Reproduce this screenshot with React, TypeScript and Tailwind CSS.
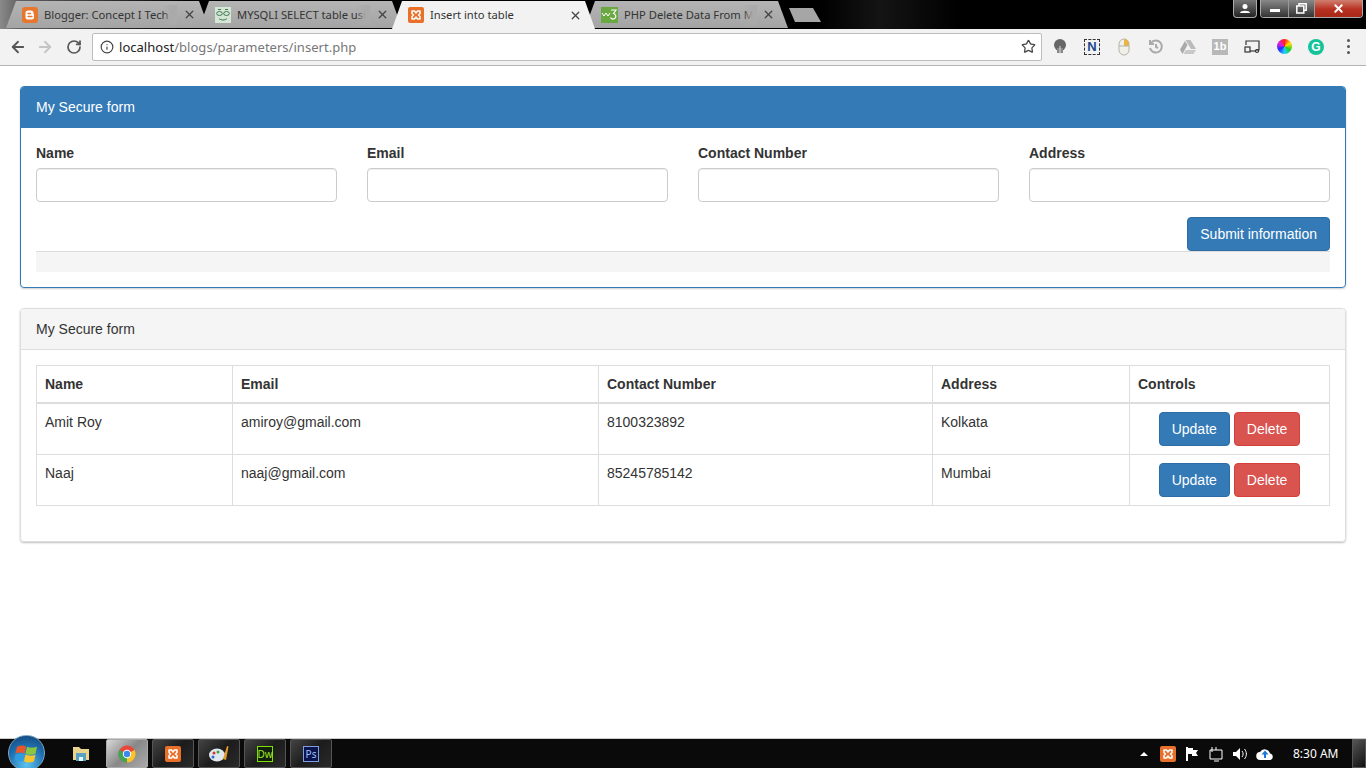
import { ArrowLeft, ArrowRight, Info, RotateCw, Star, X } from "lucide-react";
import type { ReactNode } from "react";

function XamppIcon({ size = 16 }: { size?: number }) {
  return (
    <svg width={size} height={size} viewBox="0 0 16 16" className="shrink-0">
      <rect width="16" height="16" rx="2" fill="#e8702a" />
      <path d="M4 4h2.500l1.500 2 1.500-2H12v2.500L10.500 8l1.500 1.500V12H9.500L8 10l-1.500 2H4V9.500L5.500 8 4 6.500z" fill="none" stroke="#fff" strokeWidth="1.500" strokeLinejoin="round" />
    </svg>
  );
}

function BloggerIcon() {
  return (
    <svg width="16" height="16" viewBox="0 0 16 16" className="shrink-0">
      <rect width="16" height="16" rx="3" fill="#e8772e" />
      <path d="M6 3.500h3a2.500 2.500 0 0 1 2.500 2.500v1l.5.500v2.500A2.500 2.500 0 0 1 9.500 12.500h-3.500A2.500 2.500 0 0 1 3.500 10V6A2.500 2.500 0 0 1 6 3.500z" fill="#fff" />
      <path d="M6 6.500h2.500M6 9.500h4" stroke="#e8772e" strokeWidth="1.300" strokeLinecap="round" />
    </svg>
  );
}

function GlassesIcon() {
  return (
    <svg width="16" height="16" viewBox="0 0 16 16" className="shrink-0">
      <rect width="16" height="16" fill="#d5e6d5" />
      <ellipse cx="4.500" cy="6.500" rx="2.800" ry="2" fill="none" stroke="#3d7a55" strokeWidth="1" />
      <ellipse cx="11.500" cy="6.500" rx="2.800" ry="2" fill="none" stroke="#3d7a55" strokeWidth="1" />
      <path d="M3 2.500h3M10 2.500h3M4 11.500c2 2 6 2 8 0" fill="none" stroke="#3d7a55" strokeWidth="1" />
    </svg>
  );
}

function W3Icon() {
  return (
    <svg width="17" height="16" viewBox="0 0 17 16" className="shrink-0">
      <rect width="17" height="16" fill="#6aa842" />
      <path d="M1 6l2 3 2-3 2 3 2-3" fill="none" stroke="#fff" strokeWidth="1" />
      <path d="M10 3h5l-2.500 3.500a2.800 2.800 0 1 1-3 4" fill="none" stroke="#fff" strokeWidth="1.200" />
    </svg>
  );
}

function ChromeLogo() {
  return (
    <svg width="18" height="18" viewBox="0 0 18 18">
      <circle cx="9" cy="9" r="8.500" fill="#e8483a" />
      <path d="M9 9L1.600 4.700A8.500 8.500 0 0 0 9 17.500z" fill="#3ea655" />
      <path d="M9 9V17.500A8.500 8.500 0 0 0 16.400 4.700z" fill="#f7c42c" />
      <path d="M9 9L1.600 4.700 9 .5 16.400 4.700z" fill="#e8483a" />
      <circle cx="9" cy="9" r="4.200" fill="#fff" />
      <circle cx="9" cy="9" r="3.200" fill="#3f86f0" />
    </svg>
  );
}

function Tab({ icon, title, active, first }: { icon: ReactNode; title: string; active?: boolean; first?: boolean }) {
  return (
    <div
      className={`relative flex w-[203px] shrink-0 items-center pl-[16px] pr-[13px] [clip-path:polygon(10px_0,calc(100%-10px)_0,100%_100%,0_100%)] ${first ? "" : "-ml-[10px]"} ${
        active ? "z-10 h-[28px] bg-[#f2f2f2]" : "h-[27px] bg-[linear-gradient(#b4b4b4,#a4a4a4)]"
      }`}
    >
      {icon}
      <div className="relative ml-[6px] w-[133px] overflow-hidden whitespace-nowrap text-[11.200px] leading-[20px] text-[#333]">
        {title}
        {!active && <div className="absolute inset-y-0 right-0 w-[14px] bg-[linear-gradient(to_right,#aaaaaa00,#aaaaaa_70%)]" />}
      </div>
      <X size={13} strokeWidth={2.400} className="ml-auto text-[#444]" />
    </div>
  );
}

function ExtensionIcons() {
  return (
    <div className="ml-[2px] flex items-center">
      <div className="flex w-[32px] justify-center">
        <svg width="16" height="18" viewBox="0 0 16 18">
          <circle cx="8" cy="7" r="6" fill="#666" />
          <path d="M5 10h6v5H5z" fill="#888" />
          <path d="M8 8v8" stroke="#ddd" />
        </svg>
      </div>
      <div className="flex w-[32px] justify-center">
        <div className="relative flex h-[16px] w-[16px] items-center justify-center border border-dashed border-[#333] text-[13px] font-bold leading-none text-[#1b4a8c] font-['Liberation_Sans',sans-serif]">
          N
          <div className="absolute -bottom-[2px] -right-[2px] h-[6px] w-[6px] bg-[linear-gradient(#333,#333)_center/6px_1px_no-repeat,linear-gradient(#333,#333)_center/1px_6px_no-repeat,linear-gradient(#f2f2f2,#f2f2f2)]" />
        </div>
      </div>
      <div className="flex w-[32px] justify-center">
        <svg width="12" height="18" viewBox="0 0 12 18">
          <rect x="1" y="1" width="10" height="16" rx="5" fill="#f0f0e8" stroke="#b4b4a8" />
          <path d="M6 1a5 5 0 0 1 5 5v2H6z" fill="#e9b544" />
          <path d="M1 8h10" stroke="#b4b4a8" />
        </svg>
      </div>
      <div className="flex w-[32px] justify-center">
        <svg width="16" height="16" viewBox="0 0 16 16" fill="none" stroke="#aaa" strokeWidth="2">
          <path d="M3 4a6 6 0 1 1-1 5M2 1v4h4M8 5v3l2 1" />
        </svg>
      </div>
      <div className="flex w-[32px] justify-center">
        <svg width="16" height="14" viewBox="0 0 16 14">
          <path d="M5.500 0h5l5.500 9h-5z" fill="#bbb" />
          <path d="M5 1L0 9.500 2.500 14 7.500 5z" fill="#aaa" />
          <path d="M3.500 14h10l2.500-4H6z" fill="#c8c8c8" />
        </svg>
      </div>
      <div className="flex w-[32px] justify-center">
        <div className="flex h-[16px] w-[16px] items-center justify-center bg-[#b8b8b8] text-[11px] font-bold leading-none text-white font-['Liberation_Sans',sans-serif]">1b</div>
      </div>
      <div className="flex w-[32px] justify-center">
        <svg width="16" height="14" viewBox="0 0 16 14" fill="none" stroke="#333" strokeWidth="1.200">
          <path d="M2 5V1h13v9h-3" />
          <rect x="1" y="7" width="5" height="5" />
          <path d="M6 11h6" />
          <circle cx="13" cy="11" r="1.500" />
        </svg>
      </div>
      <div className="flex w-[32px] justify-center">
        <div className="h-[15px] w-[15px] rounded-full bg-[conic-gradient(#ff2020,#ffe000,#20d020,#20d0ff,#2030ff,#e020e0,#ff2020)]" />
      </div>
      <div className="flex w-[32px] justify-center">
        <div className="flex h-[16px] w-[16px] items-center justify-center rounded-full bg-[#15c39a] text-[12px] font-bold leading-none text-white font-['Liberation_Sans',sans-serif]">G</div>
      </div>
      <div className="flex w-[32px] flex-col items-center gap-[3px]">
        <div className="h-[3px] w-[3px] rounded-full bg-[#555]" />
        <div className="h-[3px] w-[3px] rounded-full bg-[#555]" />
        <div className="h-[3px] w-[3px] rounded-full bg-[#555]" />
      </div>
    </div>
  );
}

function BrowserChrome() {
  return (
    <div className="shrink-0 font-['Noto_Sans','Open_Sans',sans-serif]">
      <div className="flex h-[29px] bg-[linear-gradient(to_right,#8a8a8a,#606060_20px,#000_190px,#000_820px,#141414_880px,#000_960px)] pl-[6px] pt-px">
        <Tab first icon={<BloggerIcon />} title="Blogger: Concept I Tech V" />
        <Tab icon={<GlassesIcon />} title="MYSQLI SELECT table usi" />
        <Tab active icon={<XamppIcon />} title="Insert into table" />
        <Tab icon={<W3Icon />} title="PHP Delete Data From M" />
        <div className="ml-px mt-[7px] h-[14px] w-[32px] bg-[#a6a6a6] [clip-path:polygon(0_0,24px_0,100%_100%,6px_100%)]" />
        <div className="ml-auto flex items-start pr-[3px] -mt-px">
          <div className="flex h-[18px] w-[24px] items-center justify-center rounded-b-[4px] border border-t-0 border-[#aaa] bg-[linear-gradient(#777,#222)]">
            <svg width="10" height="9" viewBox="0 0 10 9"><circle cx="5" cy="2.500" r="2.500" fill="#fff" /><path d="M0 9c0-3 10-3 10 0z" fill="#fff" /></svg>
          </div>
          <div className="ml-[3px] flex h-[18px] overflow-hidden rounded-b-[4px] border border-t-0 border-[#aaa]">
            <div className="flex w-[28px] items-center justify-center border-r border-[#999] bg-[linear-gradient(#888,#333)]">
              <div className="mt-[4px] h-[3px] w-[10px] bg-white" />
            </div>
            <div className="flex w-[26px] items-center justify-center border-r border-[#999] bg-[linear-gradient(#888,#333)]">
              <svg width="11" height="11" viewBox="0 0 11 11" fill="none" stroke="#fff" strokeWidth="1.500">
                <path d="M3 2.500V.8h7.200v6.400H8" />
                <rect x=".8" y="3" width="7" height="7" />
              </svg>
            </div>
            <div className="flex w-[47px] items-center justify-center bg-[linear-gradient(#d08070,#b83020_55%,#a82818)]">
              <X size={13} strokeWidth={3.500} className="text-white" />
            </div>
          </div>
        </div>
      </div>
      <div className="flex h-[37px] items-center border-b border-[#b4b4b4] bg-[#f2f2f2] pb-px">
        <ArrowLeft size={18} strokeWidth={2.400} className="ml-[9px] text-[#555]" />
        <ArrowRight size={18} strokeWidth={2.400} className="ml-[9px] text-[#c4c4c4]" />
        <RotateCw size={16} strokeWidth={2.600} className="ml-[12px] text-[#555]" />
        <div className="ml-[10px] flex h-[28px] w-[950px] items-center rounded-[2px] border border-[#bcbcbc] bg-white pl-[7px] pr-[5px]">
          <Info size={14} strokeWidth={2} className="text-[#444]" />
          <div className="ml-[5px] text-[13px] leading-[20px] tracking-[0.03px] text-[#777]">
            <span className="text-[#222]">localhost</span>/blogs/parameters/insert.php
          </div>
          <Star size={15} strokeWidth={2} className="ml-auto text-[#444]" />
        </div>
        <ExtensionIcons />
      </div>
    </div>
  );
}

function Field({ label }: { label: string }) {
  return (
    <div>
      <label className="mb-[5px] block font-bold leading-[20px]">{label}</label>
      <input className="block h-[34px] w-full rounded-[4px] border border-[#ccc] bg-white shadow-[inset_0_1px_1px_rgba(0,0,0,0.075)]" />
    </div>
  );
}

const rows = [
  { name: "Amit Roy", email: "amiroy@gmail.com", phone: "8100323892", address: "Kolkata" },
  { name: "Naaj", email: "naaj@gmail.com", phone: "85245785142", address: "Mumbai" },
];

function Page() {
  return (
    <main className="min-h-0 flex-1 bg-white px-[20px] pt-[20px] text-[14px] leading-[20px] text-[#333] font-['Liberation_Sans',Arial,sans-serif]">
      <section className="rounded-[4px] border border-[#337ab7] shadow-[0_1px_2px_rgba(0,0,0,0.2)]">
        <div className="flex h-[41px] items-center rounded-t-[3px] bg-[#337ab7] px-[15px] pb-[2px] text-white">My Secure form</div>
        <div className="p-[15px]">
          <div className="grid grid-cols-4 gap-[30px]">
            <Field label="Name" />
            <Field label="Email" />
            <Field label="Contact Number" />
            <Field label="Address" />
          </div>
          <div className="mt-[15px] flex justify-end">
            <button className="h-[34px] rounded-[4px] border border-[#2e6da4] bg-[#337ab7] px-[12px] text-white">Submit information</button>
          </div>
          <div className="h-[21px] border-t border-[#ddd] bg-[#f5f5f5]" />
        </div>
      </section>

      <section className="mt-[20px] rounded-[4px] border border-[#ddd] shadow-[0_1px_2px_rgba(0,0,0,0.25)]">
        <div className="flex h-[41px] items-center rounded-t-[3px] border-b border-[#ddd] bg-[#f5f5f5] px-[15px]">My Secure form</div>
        <div className="px-[15px] pb-[35px] pt-[15px]">
          <table className="w-full table-fixed border-collapse border border-[#ddd]">
            <colgroup>
              <col className="w-[196px]" />
              <col className="w-[366px]" />
              <col className="w-[334px]" />
              <col className="w-[197px]" />
              <col />
            </colgroup>
            <thead>
              <tr>
                {["Name", "Email", "Contact Number", "Address", "Controls"].map((h) => (
                  <th key={h} className="h-[37px] border border-b-2 border-[#ddd] px-[8px] text-left font-bold">
                    {h}
                  </th>
                ))}
              </tr>
            </thead>
            <tbody>
              {rows.map((r) => (
                <tr key={r.name}>
                  <td className="border border-[#ddd] p-[8px] align-top">{r.name}</td>
                  <td className="border border-[#ddd] p-[8px] align-top">{r.email}</td>
                  <td className="border border-[#ddd] p-[8px] align-top">{r.phone}</td>
                  <td className="border border-[#ddd] p-[8px] align-top">{r.address}</td>
                  <td className="border border-[#ddd] p-[8px] text-center align-top">
                    <div className="flex justify-center gap-[4px]">
                      <button className="h-[34px] rounded-[4px] border border-[#2e6da4] bg-[#337ab7] px-[12px] text-white">Update</button>
                      <button className="h-[34px] rounded-[4px] border border-[#d43f3a] bg-[#d9534f] px-[12px] text-white">Delete</button>
                    </div>
                  </td>
                </tr>
              ))}
            </tbody>
          </table>
        </div>
      </section>
    </main>
  );
}

function TaskButton({ active, children }: { active?: boolean; children: ReactNode }) {
  return (
    <div
      className={`flex h-[29px] w-[42px] items-center justify-center rounded-[2px] border ${
        active
          ? "border-[#aaa] bg-[linear-gradient(135deg,#d8d8d8,#888_50%,#aaa)]"
          : "border-[#555] bg-[linear-gradient(135deg,#444,#1c1c1c_50%,#2a2a2a)]"
      }`}
    >
      {children}
    </div>
  );
}

function Taskbar() {
  return (
    <footer className="relative flex h-[30px] shrink-0 items-center border-t border-[#ccc] bg-[#0a0a0a] font-['Noto_Sans','Open_Sans',sans-serif]">
      {/* start orb pokes out over the top of the bar */}
      <div className="absolute left-[8px] top-[-4px] flex h-[36px] w-[37px] items-center justify-center rounded-full border border-[#7fa8c8] bg-[radial-gradient(circle_at_50%_85%,#5cc4f0,#1f6fb0_55%,#123f70)]">
        <svg width="24" height="21" viewBox="0 0 24 21">
          <path d="M2 4c3-2 6-2 9-.500l-1.500 7c-3-1.500-6-1.500-9 0z" fill="#e8562a" />
          <path d="M12 3.700c3 1.500 6 1.500 10 0l-1.500 7c-3 1.500-7 1.500-10-.200z" fill="#8cc63f" />
          <path d="M.5 11.500c3-1.500 6-1.500 9 0L8 18.500c-3-1.500-6-1.500-9 0z" fill="#2f9be0" />
          <path d="M10.500 11.500c3 1.500 6.500 1.500 10 .200L19 18.500c-3 1.500-7 1.500-10-.200z" fill="#f7c52b" />
        </svg>
      </div>
      <svg width="18" height="17" viewBox="0 0 18 17" className="ml-[72px]">
        <path d="M1 2h6l2 2h8v11H1z" fill="#e9d58c" />
        <path d="M4 8h10v8H4z" fill="#5a9fc4" />
        <path d="M7 12h4v4H7z" fill="#dff" />
      </svg>
      <div className="ml-[16px] flex gap-[4px]">
        <TaskButton active>
          <ChromeLogo />
        </TaskButton>
        <TaskButton>
          <XamppIcon />
        </TaskButton>
        <TaskButton>
          <svg width="20" height="18" viewBox="0 0 20 18">
            <ellipse cx="8" cy="10" rx="8" ry="6.500" fill="#dfe8ee" />
            <circle cx="5" cy="8" r="1.500" fill="#d33" />
            <circle cx="9" cy="7" r="1.500" fill="#3a3" />
            <circle cx="4" cy="12" r="1.500" fill="#36c" />
            <path d="M14 14L18 1l1.500.500L17 15z" fill="#e39a2a" />
          </svg>
        </TaskButton>
        <TaskButton>
          <div className="flex h-[16px] w-[16px] items-center justify-center border border-[#7fe000] bg-[#10200a] text-[10px] leading-none text-[#9fe82a]">Dw</div>
        </TaskButton>
        <TaskButton>
          <div className="flex h-[16px] w-[16px] items-center justify-center border border-[#7f9fe0] bg-[#0c1450] text-[10px] leading-none text-[#9fc0f8]">Ps</div>
        </TaskButton>
      </div>
      <div className="ml-auto flex items-center">
        <div className="h-0 w-0 border-x-[4px] border-b-[4px] border-x-transparent border-b-white" />
        <div className="ml-[12px]"><XamppIcon /></div>
        <svg width="14" height="14" viewBox="0 0 14 14" className="ml-[9px]">
          <path d="M1 0h2v14H1zM3 1h5v2h5l-2 3 2 3H7V7H3z" fill="#fff" />
        </svg>
        <svg width="16" height="16" viewBox="0 0 16 16" fill="none" stroke="#fff" className="ml-[9px]">
          <path d="M2 4h12v9H2zM4 1v5M8 1v3M6 15h5" />
        </svg>
        <svg width="15" height="14" viewBox="0 0 15 14" className="ml-[9px]">
          <path d="M0 5h3l4-4v12l-4-4H0z" fill="#fff" />
          <path d="M9 4c1.500 2 1.500 4 0 6M11.500 2c2.500 3 2.500 7 0 10" fill="none" stroke="#fff" />
        </svg>
        <svg width="18" height="14" viewBox="0 0 18 14" className="ml-[8px]">
          <path d="M4.500 13a4 4 0 0 1-.5-8 5.500 5.500 0 0 1 10 1.500 3.300 3.300 0 0 1 0 6.500z" fill="#fff" />
          <path d="M9 3.500l3.500 4H10V11H8V7.500H5.500z" fill="#1b78d8" />
        </svg>
        <div className="ml-[19px] w-[44px] whitespace-nowrap text-[12px] leading-[16px] text-white">8:30 AM</div>
        <div className="ml-[15px] h-[29px] w-[14px] border border-[#555] bg-[linear-gradient(135deg,#555,#111)]" />
      </div>
    </footer>
  );
}

export default function App() {
  return (
    <div className="flex h-screen w-full flex-col overflow-hidden bg-white">
      <BrowserChrome />
      <Page />
      <Taskbar />
    </div>
  );
}
